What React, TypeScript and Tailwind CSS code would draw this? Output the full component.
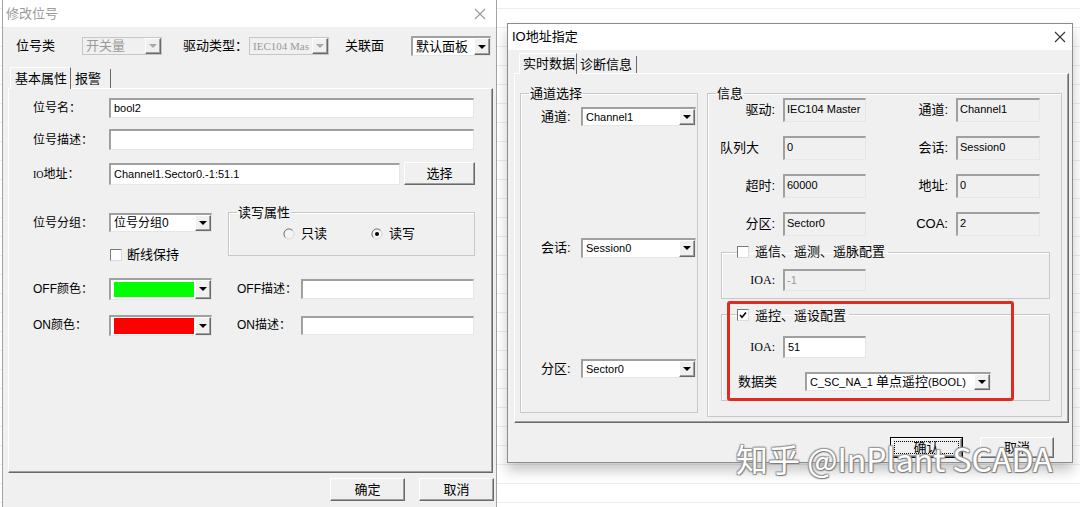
import React from 'react';

const sunken =
  'border-t-2 border-l-2 border-r border-b border-t-[#a0a0a0] border-l-[#a0a0a0] border-r-[#e6e6e6] border-b-[#e6e6e6]';
const raised =
  'border border-t-white border-l-white border-r-[#6a6a6a] border-b-[#6a6a6a] shadow-[inset_-1px_-1px_0_#a0a0a0]';
const group = 'border border-[#c8c8c8] shadow-[inset_1px_1px_0_#ffffff]';

const Arrow = ({ dim }: { dim?: boolean }) => (
  <div
    className={`w-0 h-0 border-x-[4px] border-x-transparent border-t-[4px] ${dim ? 'border-t-[#a8a8a8]' : 'border-t-black'}`}
  />
);

const DropBtn = ({ dim }: { dim?: boolean }) => (
  <div className={`w-[16px] h-full shrink-0 flex items-center justify-center bg-[#f0f0f0] ${raised}`}>
    <Arrow dim={dim} />
  </div>
);

type BoxProps = { className?: string; children?: React.ReactNode; dim?: boolean };

const Combo = ({ className, children, dim }: BoxProps) => (
  <div
    className={`flex ${className} ${dim ? 'border border-[#c6c6c6] bg-[#f0f0f0] text-[#9a9a9a]' : `${sunken} bg-white`}`}
  >
    <div className="flex-1 min-w-0 flex items-center overflow-hidden whitespace-nowrap pl-[3px]">{children}</div>
    <DropBtn dim={dim} />
  </div>
);

const Edit = ({ className, children }: BoxProps) => (
  <div className={`${sunken} flex items-center px-[3px] whitespace-nowrap overflow-hidden ${className}`}>
    {children}
  </div>
);

const InfoBox = ({ className, children }: BoxProps) => (
  <div className={`${sunken} bg-[#f0f0f0] px-[2px] pt-[1px] text-[11px] whitespace-nowrap ${className}`}>
    {children}
  </div>
);

const Btn = ({ className, children, focus }: BoxProps & { focus?: boolean }) =>
  focus ? (
    <div className={`border border-black ${className}`}>
      <div className={`w-full h-full bg-[#f0f0f0] ${raised} p-[2px]`}>
        <div className="w-full h-full border border-dotted border-black flex items-center justify-center">
          {children}
        </div>
      </div>
    </div>
  ) : (
    <div className={`flex items-center justify-center bg-[#f0f0f0] ${raised} ${className}`}>{children}</div>
  );

const CloseX = ({ color }: { color: string }) => (
  <svg width="12" height="12" viewBox="0 0 12 12">
    <path d="M1 1L11 11M11 1L1 11" stroke={color} strokeWidth="1.1" />
  </svg>
);

const Check = ({ checked }: { checked?: boolean }) => (
  <div className="w-[12px] h-[12px] bg-white border border-t-[#7a7a7a] border-l-[#7a7a7a] border-r-[#dcdcdc] border-b-[#dcdcdc] flex items-center justify-center shrink-0">
    {checked && (
      <svg width="8" height="8" viewBox="0 0 8 8">
        <path d="M1 4L3 6.2L7 1.5" stroke="#000" strokeWidth="1.6" fill="none" />
      </svg>
    )}
  </div>
);

const Radio = ({ checked }: { checked?: boolean }) => (
  <svg width="12" height="12" viewBox="0 0 12 12" className="shrink-0">
    <circle cx="6" cy="6" r="5" fill="#f4f4f4" stroke="#d8d8d8" />
    <path d="M2.4 9.6A5 5 0 0 1 9.6 2.4" stroke="#7a7a7a" fill="none" />
    {checked && <circle cx="6" cy="6" r="2" fill="#000" />}
  </svg>
);

const LeftDialog = () => (
  <div className="absolute left-[2px] top-0 w-[495px] h-[520px] bg-[#f0f0f0] border-x border-[#a3a3a3] text-[12px] text-black">
    <div className="h-[27px] bg-white flex items-center justify-between pl-[3px] pr-[10px]">
      <span className="text-[13px] text-[#9a9a9a]">修改位号</span>
      <CloseX color="#9a9a9a" />
    </div>

    <div className="flex items-center mt-[9px] h-[20px] pl-[13px] text-[13px]">
      <span className="w-[66px]">位号类</span>
      <Combo className="w-[80px] h-[18px]" dim>
        <span className="text-[13px]">开关量</span>
      </Combo>
      <span className="ml-[21px] w-[66px]">驱动类型：</span>
      <Combo className="w-[80px] h-[18px]" dim>
        <span className="text-[11px] font-['Liberation_Serif',serif]">IEC104 Mas</span>
      </Combo>
      <span className="ml-[16px] w-[66px]">关联面</span>
      <Combo className="w-[80px] h-[20px]">
        <span className="text-[13px]">默认面板</span>
      </Combo>
    </div>

    <div className="flex items-end ml-[7px] mt-[11px] h-[21px] text-[13px]">
      <div className="relative z-10 -mb-px h-[22px] w-[61px] pl-[4px] flex items-center bg-[#f0f0f0] border-t border-l border-r border-t-white border-l-white border-r-[#696969]">
        基本属性
      </div>
      <div className="h-[19px] w-[40px] pl-[4px] flex items-center border-r border-r-[#696969]">报警</div>
    </div>

    <div className="ml-[5px] w-[485px] h-[385px] border-t border-l border-r border-b border-t-white border-l-white border-r-[#696969] border-b-[#696969] shadow-[inset_-1px_-1px_0_#a0a0a0]">
      <div className="flex items-center mt-[9px] pl-[24px]">
        <span className="w-[76px]">位号名：</span>
        <Edit className="w-[365px] h-[20px] bg-white text-[11px]">bool2</Edit>
      </div>
      <div className="flex items-center mt-[11px] pl-[24px]">
        <span className="w-[76px]">位号描述：</span>
        <Edit className="w-[365px] h-[21px] bg-white" />
      </div>
      <div className="flex items-center mt-[12px] pl-[24px]">
        <span className="w-[76px]">
          <span className="text-[10px] font-['Liberation_Serif',serif]">IO</span>地址：
        </span>
        <Edit className="w-[291px] h-[22px] bg-white text-[11px]">Channel1.Sector0.-1:51.1</Edit>
        <Btn className="ml-[4px] w-[71px] h-[23px] text-[13px]">选择</Btn>
      </div>

      <div className="flex items-start mt-[19px]">
        <div className="w-[219px] pt-[9px]">
          <div className="flex items-center pl-[24px]">
            <span className="w-[76px]">位号分组：</span>
            <Combo className="w-[103px] h-[19px]">
              <span className="text-[12px]">位号分组0</span>
            </Combo>
          </div>
          <div className="flex items-center gap-[5px] mt-[13px] ml-[101px]">
            <Check />
            <span className="text-[13px]">断线保持</span>
          </div>
        </div>
        <fieldset className={`w-[247px] h-[52px] ${group}`}>
          <legend className="ml-[8px] px-[1px] text-[13px] leading-[17px]">读写属性</legend>
          <div className="flex items-center pl-[54px] mt-[3px] text-[13px]">
            <div className="w-[88px] flex items-center gap-[6px]">
              <Radio />
              <span>只读</span>
            </div>
            <div className="flex items-center gap-[6px]">
              <Radio checked />
              <span>读写</span>
            </div>
          </div>
        </fieldset>
      </div>

      <div className="flex items-center mt-[13px] pl-[24px]">
        <span className="w-[76px]">OFF颜色：</span>
        <Combo className="w-[103px] h-[22px]">
          <div className="w-[80px] h-[15px] bg-[#00ff00]" />
        </Combo>
        <span className="ml-[25px] w-[64px]">OFF描述：</span>
        <Edit className="w-[173px] h-[20px] bg-white" />
      </div>
      <div className="flex items-center mt-[15px] pl-[24px]">
        <span className="w-[76px]">ON颜色：</span>
        <Combo className="w-[103px] h-[21px]">
          <div className="w-[80px] h-[16px] bg-[#ff0000]" />
        </Combo>
        <span className="ml-[25px] w-[64px]">ON描述：</span>
        <Edit className="w-[173px] h-[19px] bg-white" />
      </div>
    </div>

    <div className="flex justify-end gap-[14px] mt-[5px] pr-[2px] text-[13px]">
      <Btn className="w-[75px] h-[23px]">确定</Btn>
      <Btn className="w-[75px] h-[23px]">取消</Btn>
    </div>
  </div>
);

const InfoRow = ({
  l1,
  v1,
  l2,
  v2,
  left,
}: {
  l1: string;
  v1: string;
  l2: string;
  v2: string;
  left?: boolean;
}) => (
  <div className="flex items-center h-[24px] pl-[9px]">
    <span className={`w-[58px] ${left ? 'text-left pl-[3px]' : 'text-right'}`}>{l1}</span>
    <InfoBox className="ml-[8px] w-[83px] h-[24px]">{v1}</InfoBox>
    <span className="w-[82px] text-right">{l2}</span>
    <InfoBox className="ml-[8px] w-[84px] h-[24px]">{v2}</InfoBox>
  </div>
);

const RightDialog = () => (
  <div className="absolute left-[507px] top-[23px] w-[566px] h-[440px] bg-[#f0f0f0] border border-[#8c8c8c] shadow-[0_8px_12px_rgba(0,0,0,0.22)] text-[13px] text-black">
    <div className="h-[26px] bg-white flex items-center justify-between pl-[4px] pr-[6px]">
      <span className="text-[13px]">IO地址指定</span>
      <CloseX color="#333333" />
    </div>

    <div className="flex items-end ml-[11px] mt-[3px] h-[20px]">
      <div className="relative z-10 -mb-px h-[21px] w-[58px] pl-[3px] flex items-center bg-[#f0f0f0] border-t border-l border-r border-t-white border-l-white border-r-[#696969]">
        实时数据
      </div>
      <div className="h-[17px] w-[60px] pl-[3px] flex items-center border-r border-r-[#696969]">诊断信息</div>
    </div>

    <div className="ml-[6px] w-[555px] h-[350px] flex items-start border-t border-l border-r border-b border-t-white border-l-white border-r-[#696969] border-b-[#696969] shadow-[inset_-1px_-1px_0_#a0a0a0]">
      <fieldset className={`ml-[5px] mt-[11px] w-[178px] h-[328px] ${group}`}>
        <legend className="ml-[8px] px-[1px] leading-[17px]">通道选择</legend>
        <div className="flex items-center mt-[5px] pl-[20px]">
          <span className="w-[40px]">通道:</span>
          <Combo className="w-[115px] h-[19px]">
            <span className="text-[11px]">Channel1</span>
          </Combo>
        </div>
        <div className="flex items-center mt-[111px] pl-[20px]">
          <span className="w-[40px]">会话:</span>
          <Combo className="w-[115px] h-[20px]">
            <span className="text-[11px]">Session0</span>
          </Combo>
        </div>
        <div className="flex items-center mt-[101px] pl-[20px]">
          <span className="w-[40px]">分区:</span>
          <Combo className="w-[115px] h-[19px]">
            <span className="text-[11px]">Sector0</span>
          </Combo>
        </div>
      </fieldset>

      <fieldset className={`ml-[9px] mt-[11px] w-[355px] h-[332px] ${group}`}>
        <legend className="ml-[8px] px-[1px] leading-[17px]">信息</legend>
        <div className="flex flex-col gap-[14px] -mt-[4px]">
          <InfoRow l1="驱动:" v1="IEC104 Master" l2="通道:" v2="Channel1" />
          <InfoRow l1="队列大" v1="0" l2="会话:" v2="Session0" left />
          <InfoRow l1="超时:" v1="60000" l2="地址:" v2="0" />
          <InfoRow l1="分区:" v1="Sector0" l2="COA:" v2="2" />
        </div>

        <fieldset className={`ml-[13px] mt-[7px] w-[329px] h-[56px] ${group}`}>
          <legend className="ml-[15px] pr-[3px] leading-[17px]">
            <span className="inline-flex items-center gap-[6px]">
              <Check />
              遥信、遥测、遥脉配置
            </span>
          </legend>
          <div className="flex items-center mt-[7px] pl-[9px]">
            <span className="w-[44px] text-right text-[12px] font-['Liberation_Serif',serif]">IOA:</span>
            <InfoBox className="ml-[8px] w-[83px] h-[22px] text-[#9a9a9a]">-1</InfoBox>
          </div>
        </fieldset>

        <fieldset className={`ml-[13px] mt-[7px] w-[329px] h-[95px] ${group}`}>
          <legend className="ml-[15px] pr-[3px] leading-[17px]">
            <span className="inline-flex items-center gap-[6px]">
              <Check checked />
              遥控、遥设配置
            </span>
          </legend>
          <div className="flex items-center mt-[12px] pl-[9px]">
            <span className="w-[44px] text-right text-[12px] font-['Liberation_Serif',serif]">IOA:</span>
            <Edit className="ml-[8px] w-[83px] h-[22px] bg-white text-[11px] items-start pt-[1px]">51</Edit>
          </div>
          <div className="flex items-center mt-[14px] pl-[16px]">
            <span className="w-[67px]">数据类</span>
            <Combo className="w-[186px] h-[19px]">
              <span className="text-[11px]">
                C_SC_NA_1 <span className="text-[13px]">单点遥控</span>(BOOL)
              </span>
            </Combo>
          </div>
        </fieldset>
      </fieldset>
    </div>

    <div className="flex justify-end gap-[17px] mt-[14px] pr-[18px]">
      <Btn className="w-[73px] h-[21px]" focus>
        确认
      </Btn>
      <Btn className="w-[74px] h-[21px]">取消</Btn>
    </div>

    <div className="absolute left-[219px] top-[277px] w-[287px] h-[100px] border-[3px] border-[#e02a22] rounded-[3px]" />
  </div>
);

const App = () => {
  return (
    <div className="relative w-[1080px] h-[507px] overflow-hidden bg-white bg-[linear-gradient(to_bottom,#ededed_1px,transparent_1px)] bg-[length:100%_19px] bg-[position:0_8px] font-['Liberation_Sans','Noto_Sans_CJK_SC',sans-serif]">
      <LeftDialog />
      <RightDialog />
      <div className="absolute left-[736px] top-[442px] text-[32px] leading-none text-white whitespace-nowrap font-['Noto_Sans_CJK_SC',sans-serif] [text-shadow:1px_1px_1px_#7a7a7a,-1px_-1px_1px_#9a9a9a,1px_-1px_1px_#9a9a9a,-1px_1px_1px_#9a9a9a]">
        知乎 @InPlant SCADA
      </div>
    </div>
  );
};

export default App;
